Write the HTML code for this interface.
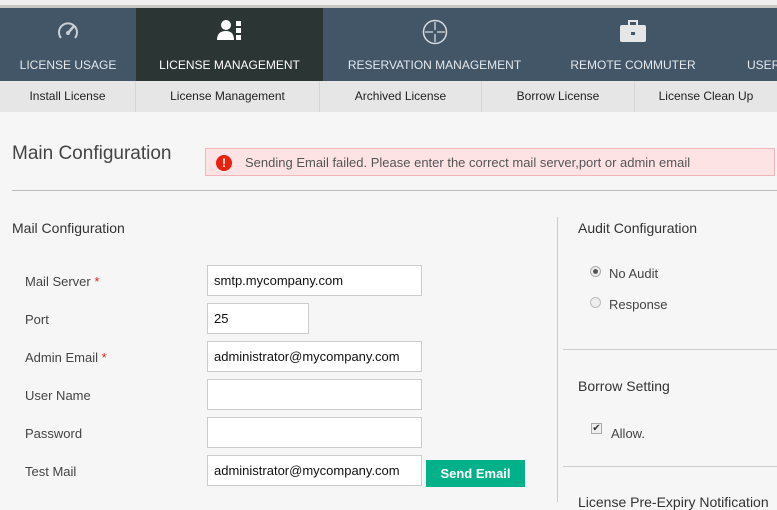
<!DOCTYPE html>
<html><head><style>
*{margin:0;padding:0;box-sizing:border-box}
body{width:777px;height:502px;overflow:hidden;background:#f6f6f6;font-family:"Liberation Sans",sans-serif;color:#333;position:relative}
.top{position:absolute;left:0;top:0;width:777px;height:8px;background:#f0eeee;border-bottom:3px solid #c9c6c6}
.nav{position:absolute;top:8px;left:0;width:777px;height:73px;background:#425667}
.tab{position:absolute;top:0;height:73px;color:#e4e8ec;font-size:12px;text-align:center}
.tab .lbl{position:absolute;left:0;right:0;top:50px}
.tab svg{position:absolute;left:50%;top:10px;transform:translateX(-50%)}
.act{background:#2b3534;color:#fff}
.sub{position:absolute;top:81px;left:0;width:777px;height:31px;background:#e6e6e6}
.s{position:absolute;top:0;height:31px;line-height:30px;font-size:12px;color:#222;text-align:center;border-right:1px solid #d6d6d6}
.abs{position:absolute}
h1{position:absolute;left:12px;top:143px;font-size:19px;font-weight:normal;color:#444}
.err{position:absolute;left:205px;top:148px;width:570px;height:28px;background:#fde3e4;border:1px solid #f5b6b9;font-size:13px;color:#555;line-height:27px;padding-left:39px}
.err i{position:absolute;left:10px;top:6px;width:16px;height:16px;border-radius:50%;background:#e8200e;color:#fff;font-style:normal;font-weight:bold;font-size:12px;line-height:16px;text-align:center}
.hr{position:absolute;height:1px;background:#bbb}
.h2{position:absolute;font-size:14px;color:#333}
.lab{position:absolute;left:25px;font-size:13px;color:#444}
.lab b{color:#d22;font-weight:normal}
.in{position:absolute;left:207px;height:31px;background:#fff;border:1px solid #ccc;font-size:13px;color:#111;line-height:29px;padding-left:6px}
</style></head><body>
<div class="top"></div>
<div class="nav">
 <div class="tab" style="left:0;width:136px"><svg width="26" height="26" viewBox="0 0 26 26"><path d="M6 20 A9 9 0 1 1 20 20" fill="none" stroke="#c8ced4" stroke-width="2"/><path d="M13 15 L19 8" stroke="#c8ced4" stroke-width="2.5"/><circle cx="13" cy="15" r="2" fill="#c8ced4"/></svg><div class="lbl">LICENSE USAGE</div></div>
 <div class="tab act" style="left:136px;width:187px"><svg width="28" height="26" viewBox="0 0 28 26"><circle cx="10" cy="7" r="5" fill="#fff"/><path d="M1 22 Q1 13 10 13 Q18 13 18 22Z" fill="#fff"/><rect x="20" y="3" width="5" height="5" fill="#fff"/><rect x="20" y="10" width="5" height="5" fill="#fff"/><rect x="20" y="17" width="5" height="5" fill="#fff"/></svg><div class="lbl">LICENSE MANAGEMENT</div></div>
 <div class="tab" style="left:323px;width:223px"><svg width="28" height="28" viewBox="0 0 28 28"><circle cx="14" cy="14" r="11.5" fill="none" stroke="#d6dbe0" stroke-width="1.5"/><path d="M14 4v8M14 16v8M4 14h8M16 14h8" stroke="#d6dbe0" stroke-width="1.3"/></svg><div class="lbl">RESERVATION MANAGEMENT</div></div>
 <div class="tab" style="left:546px;width:174px"><svg width="28" height="26" viewBox="0 0 28 26"><rect x="1" y="7" width="26" height="17" rx="2" fill="#e4e6e8"/><path d="M10 7V3h8v4" fill="none" stroke="#e4e6e8" stroke-width="2"/><rect x="12" y="14" width="4" height="3" fill="#425667"/></svg><div class="lbl">REMOTE COMMUTER</div></div>
 <div class="tab" style="left:720px;width:100px;text-align:left"><div class="lbl" style="left:27px">USER</div></div>
</div>
<div class="sub">
 <div class="s" style="left:0;width:136px">Install License</div>
 <div class="s" style="left:136px;width:184px">License Management</div>
 <div class="s" style="left:320px;width:162px">Archived License</div>
 <div class="s" style="left:482px;width:153px">Borrow License</div>
 <div class="s" style="left:635px;width:142px;border:none">License Clean Up</div>
</div>
<h1>Main Configuration</h1>
<div class="err"><i>!</i>Sending Email failed. Please enter the correct mail server,port or admin email</div>
<div class="hr" style="left:12px;top:190px;width:765px"></div>
<div class="h2" style="left:12px;top:220px">Mail Configuration</div>
<div class="abs" style="left:557px;top:217px;width:1px;height:285px;background:#ccc"></div>
<div class="lab" style="top:274px">Mail Server <b>*</b></div>
<div class="in" style="top:265px;width:215px">smtp.mycompany.com</div>
<div class="lab" style="top:312px">Port</div>
<div class="in" style="top:303px;width:102px">25</div>
<div class="lab" style="top:350px">Admin Email <b>*</b></div>
<div class="in" style="top:341px;width:215px">administrator@mycompany.com</div>
<div class="lab" style="top:388px">User Name</div>
<div class="in" style="top:379px;width:215px"></div>
<div class="lab" style="top:426px">Password</div>
<div class="in" style="top:417px;width:215px"></div>
<div class="lab" style="top:464px">Test Mail</div>
<div class="in" style="top:455px;width:215px">administrator@mycompany.com</div>
<div class="abs" style="left:426px;top:460px;width:99px;height:27px;background:#01b189;color:#fff;font-weight:bold;font-size:13px;text-align:center;line-height:27px">Send Email</div>
<div class="h2" style="left:578px;top:220px">Audit Configuration</div>
<div class="abs" style="left:590px;top:266px;width:11px;height:11px;border-radius:50%;border:1px solid #aaa;background:#eee"><div style="margin:2px;width:5px;height:5px;border-radius:50%;background:#555"></div></div>
<div class="abs" style="left:609px;top:266px;font-size:13px;color:#444">No Audit</div>
<div class="abs" style="left:590px;top:297px;width:11px;height:11px;border-radius:50%;border:1px solid #bbb;background:#eee"></div>
<div class="abs" style="left:609px;top:297px;font-size:13px;color:#444">Response</div>
<div class="hr" style="left:563px;top:349px;width:214px;background:#ccc"></div>
<div class="h2" style="left:578px;top:378px">Borrow Setting</div>
<div class="abs" style="left:591px;top:423px;width:11px;height:11px;border:1px solid #aaa;background:#eee;font-size:10px;line-height:9px;text-align:center">✔</div>
<div class="abs" style="left:611px;top:426px;font-size:13px;color:#444">Allow.</div>
<div class="hr" style="left:563px;top:466px;width:214px;background:#ccc"></div>
<div class="h2" style="left:578px;top:494px">License Pre-Expiry Notification</div>
</body></html>
